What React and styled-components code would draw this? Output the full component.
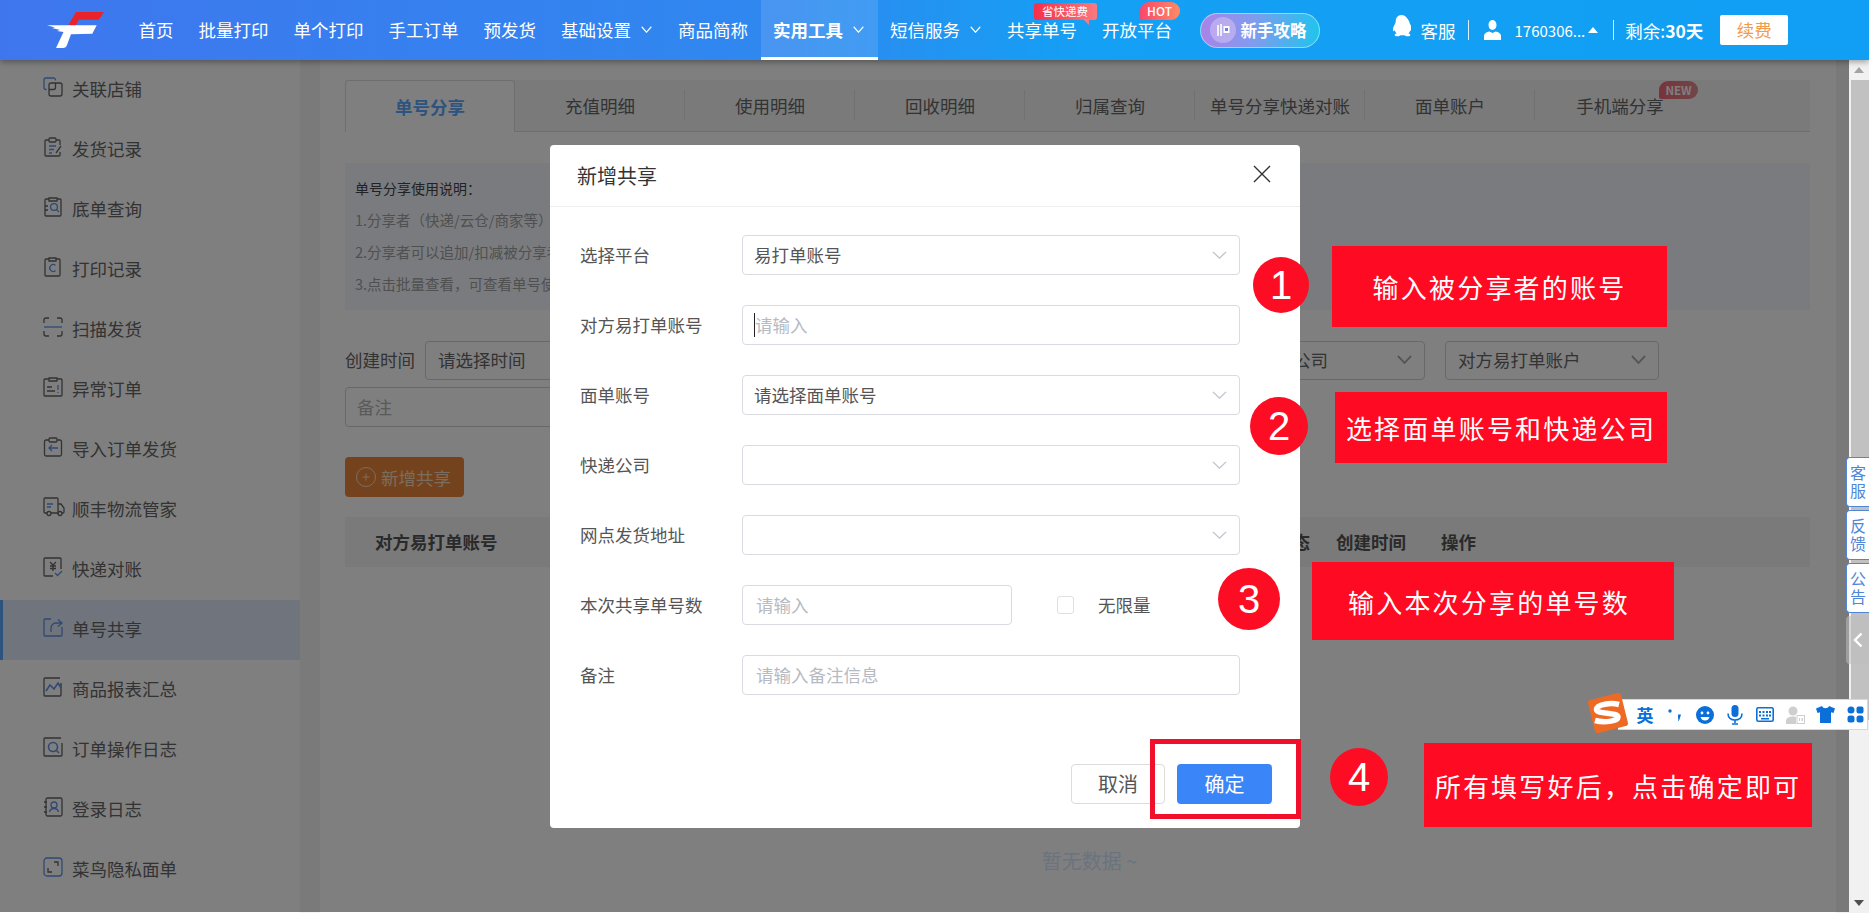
import React from "react";
import styled, { createGlobalStyle } from "styled-components";

const GlobalStyle = createGlobalStyle`
  html, body {
    margin: 0;
    height: 100%;
    overflow: hidden;
    background: #fff;
    font-family: "Noto Sans CJK SC", "Noto Sans", sans-serif;
  }
  * { box-sizing: border-box; }
`;

const navItems = [
  { label: "首页" },
  { label: "批量打印" },
  { label: "单个打印" },
  { label: "手工订单" },
  { label: "预发货" },
  { label: "基础设置", arrow: true },
  { label: "商品简称" },
  { label: "实用工具", arrow: true, active: true },
  { label: "短信服务", arrow: true },
  { label: "共享单号", badge: "save" },
  { label: "开放平台", badge: "hot" },
];

const tabs = ["单号分享", "充值明细", "使用明细", "回收明细", "归属查询", "单号分享快递对账", "面单账户", "手机端分享"];

const INK = "#666";
const TINT = "#5f93e6";

// sidebar icons are all drawn on a 20x20 box
const sideIcons = {
  link: (
    <>
      <path d="M12.5 3.5V3a2 2 0 0 0-2-2H3a2 2 0 0 0-2 2v7.5a2 2 0 0 0 2 2h.5" stroke={TINT} />
      <rect x="6" y="6" width="13" height="13" rx="2" />
      <path d="M6 12.5h4.5a2 2 0 0 0 2-2V6" />
    </>
  ),
  record: (
    <>
      <path d="M6 3H3a1 1 0 0 0-1 1v14a1 1 0 0 0 1 1h13a1 1 0 0 0 1-1v-3M17 8V4a1 1 0 0 0-1-1h-3" />
      <rect x="6" y="1" width="7" height="4" rx="1" />
      <path d="M6 9h7M6 12.5h5M6 16h3" stroke={TINT} />
      <path d="M18 9l-5 7" />
    </>
  ),
  search: (
    <>
      <path d="M6 2H3a1 1 0 0 0-1 1v15a1 1 0 0 0 1 1h14a1 1 0 0 0 1-1V3a1 1 0 0 0-1-1h-3M6 1h8v3H6z" />
      <circle cx="11" cy="10" r="3.4" stroke={TINT} />
      <path d="M13.5 12.5l2.5 2.5" stroke={TINT} />
      <path d="M2 9h3M2 13h3" />
    </>
  ),
  print: (
    <>
      <path d="M6 2H3a1 1 0 0 0-1 1v15a1 1 0 0 0 1 1h13a1 1 0 0 0 1-1V3a1 1 0 0 0-1-1h-3M6 1h7v3H6z" />
      <path d="M12.5 8.5a3.4 3.4 0 1 0 0 5" stroke={TINT} />
    </>
  ),
  scan: (
    <>
      <path d="M1 6V3a2 2 0 0 1 2-2h3M14 1h3a2 2 0 0 1 2 2v3M1 14v3a2 2 0 0 0 2 2h3M14 19h3a2 2 0 0 0 2-2v-3" />
      <path d="M1 10h18" stroke={TINT} />
    </>
  ),
  alert: (
    <>
      <path d="M6 2H2a1 1 0 0 0-1 1v15a1 1 0 0 0 1 1h16a1 1 0 0 0 1-1V3a1 1 0 0 0-1-1h-4M6 1h8v3H6z" />
      <path d="M4 10h5M4 14h8" />
      <path d="M15 8v5M15 15v1" stroke={TINT} />
    </>
  ),
  importing: (
    <>
      <path d="M6 3H3a1.5 1.5 0 0 0-1.5 1.5v13A1.5 1.5 0 0 0 3 19h14a1.5 1.5 0 0 0 1.5-1.5v-13A1.5 1.5 0 0 0 17 3h-3" />
      <rect x="6" y="1" width="8" height="4" rx="1" />
      <path d="M15 11H6M9 8l-3 3 3 3" stroke={TINT} />
    </>
  ),
  truck: (
    <>
      <path d="M4 16H2a1 1 0 0 1-1-1V2a1 1 0 0 1 1-1h12a1 1 0 0 1 1 1v14H8" />
      <path d="M15 7h3l3 4v4a1 1 0 0 1-1 1h-1" />
      <circle cx="6" cy="16.5" r="2" />
      <circle cx="17" cy="16.5" r="2" />
      <path d="M4 7h6M4 10h4" stroke={TINT} />
    </>
  ),
  bill: (
    <>
      <path d="M10 19H2a1 1 0 0 1-1-1V2a1 1 0 0 1 1-1h15a1 1 0 0 1 1 1v10" />
      <path d="M7 5l3 3 3-3M10 8v6M7 9h6M7 11.5h6" />
      <path d="M12 16l2.5 2.5L19 14" stroke={TINT} />
    </>
  ),
  share: (
    <>
      <path d="M8 2H2a1 1 0 0 0-1 1v15a1 1 0 0 0 1 1h16a1 1 0 0 0 1-1v-8" stroke={TINT} />
      <path d="M8 15v-4a5 5 0 0 1 5-5h5M15 2.5L19 6l-4 3.500" stroke={TINT} />
    </>
  ),
  chart: (
    <>
      <path d="M17 1H2a1 1 0 0 0-1 1v16a1 1 0 0 0 1 1h15a1 1 0 0 0 1-1V6" />
      <path d="M3 14l4-6 4 4 4-6 3 5" stroke={TINT} strokeWidth="1.6" />
    </>
  ),
  log: (
    <>
      <path d="M18 1H2a1 1 0 0 0-1 1v16a1 1 0 0 0 1 1h16a1 1 0 0 0 1-1V6" />
      <circle cx="10" cy="10" r="4.500" stroke={TINT} strokeWidth="1.6" />
      <path d="M13.500 13.500l2.500 2.500" stroke={TINT} strokeWidth="1.6" />
    </>
  ),
  login: (
    <>
      <rect x="3" y="1" width="16" height="18" rx="1.500" />
      <circle cx="11" cy="8" r="3" stroke={TINT} />
      <path d="M6.500 15c.5-2.500 2.300-3.500 4.500-3.500s4 1 4.500 3.500" stroke={TINT} />
      <path d="M1 5h3M1 10h3M1 15h3" />
    </>
  ),
  privacy: (
    <>
      <rect x="1" y="1" width="18" height="18" rx="3" stroke={TINT} />
      <path d="M5 11v4h4M15 9V5h-4" />
    </>
  ),
};

const sideMenu = [
  { label: "关联店铺", icon: "link" },
  { label: "发货记录", icon: "record" },
  { label: "底单查询", icon: "search" },
  { label: "打印记录", icon: "print" },
  { label: "扫描发货", icon: "scan" },
  { label: "异常订单", icon: "alert" },
  { label: "导入订单发货", icon: "importing" },
  { label: "顺丰物流管家", icon: "truck", wide: true },
  { label: "快递对账", icon: "bill" },
  { label: "单号共享", icon: "share", active: true },
  { label: "商品报表汇总", icon: "chart" },
  { label: "订单操作日志", icon: "log" },
  { label: "登录日志", icon: "login" },
  { label: "菜鸟隐私面单", icon: "privacy" },
];

const formRows = [
  { label: "选择平台", kind: "select", value: "易打单账号" },
  { label: "对方易打单账号", kind: "focus", placeholder: "请输入" },
  { label: "面单账号", kind: "select", value: "请选择面单账号" },
  { label: "快递公司", kind: "select" },
  { label: "网点发货地址", kind: "select" },
  { label: "本次共享单号数", kind: "count", placeholder: "请输入" },
  { label: "备注", kind: "input", placeholder: "请输入备注信息" },
];

const steps = [
  { n: 1, text: "输入被分享者的账号", cx: 1253, cy: 257, cs: 56, x: 1332, y: 246, w: 335, h: 81 },
  { n: 2, text: "选择面单账号和快递公司", cx: 1250, cy: 397, cs: 58, x: 1335, y: 392, w: 332, h: 71 },
  { n: 3, text: "输入本次分享的单号数", cx: 1218, cy: 568, cs: 62, x: 1312, y: 562, w: 362, h: 78, nudge: 8 },
  { n: 4, text: "所有填写好后，点击确定即可", cx: 1330, cy: 748, cs: 58, x: 1424, y: 743, w: 388, h: 84 },
];

function Chevron({ w = 15, h = 8, color = "#c0c4cc", sw = 1.5 }) {
  return (
    <svg width={w} height={h} viewBox="0 0 16 9" fill="none" stroke={color} strokeWidth={sw} preserveAspectRatio="none">
      <path d="M1 1l7 7 7-7" />
    </svg>
  );
}

function Logo() {
  return (
    <svg width="57" height="37" viewBox="0 0 57 37">
      <path d="M29 0h28l-5.300 7.700h-20L29 13.300h-7.700z" fill="#e8232a" />
      <path
        d="M0 13.300h49.700l-4.400 8.400-21.300.6-4 10.700Q19 36 16 36H9l7.500-16-6.500-1 3-1-8-2 3-.5z"
        fill="#fff"
      />
    </svg>
  );
}

function QQIcon() {
  return (
    <svg width="19" height="22" viewBox="0 0 19 22" fill="#fff">
      <path d="M9.500 0C5.500 0 3.700 3 3.700 6.500c0 1-.3 1.800-.9 2.800C1.500 11.500.7 13.500 1 15.500c.2 1 .8 1 1.700-.3.3 1.200 1 2.300 1.800 3-1.500.6-2 1.500-1.700 2.300.4.900 3 1.200 5 .2.500-.3 1-.4 2.700-.4s2.200.1 2.700.4c2 1 4.600.7 5-.2.300-.8-.2-1.700-1.700-2.300.8-.7 1.500-1.800 1.800-3 .9 1.300 1.500 1.300 1.700.3.300-2-.5-4-1.800-6.200-.6-1-.9-1.800-.9-2.800C15.300 3 13.500 0 9.500 0z" />
    </svg>
  );
}

function UserIcon() {
  return (
    <svg width="17" height="20" viewBox="0 0 17 20" fill="#fff">
      <ellipse cx="8.500" cy="5" rx="4" ry="5" />
      <path d="M0 20v-4c0-2.500 2.500-4 5.500-4.500L8.500 13l3-1.500c3 .5 5.500 2 5.500 4.500v4zM7.300 14.500h2.400v2.500H7.300z" />
    </svg>
  );
}

function GuideIcon() {
  return (
    <svg width="26" height="26" viewBox="0 0 26 26">
      <circle cx="13" cy="13" r="13" fill="#c4b4f2" opacity="0.75" />
      <path d="M8 8v11M11 7v12" stroke="#fff" strokeWidth="1.600" />
      <path d="M13.500 9h6v7h-6z" fill="#fff" />
      <path d="M15 11h3v3h-3z" fill="#6f7fe8" />
    </svg>
  );
}

function SogouLogo() {
  return (
    <svg width="42" height="42" viewBox="0 0 42 42">
      <rect x="4" y="4" width="34" height="34" rx="3" fill="#ee6a24" transform="rotate(-14 21 21)" />
      <path d="M32 12.500C24 10.500 10 12 9.500 17.500 9 22.500 31 20 31 25c0 4.500-14 6-23 3.500" fill="none" stroke="#fff" strokeWidth="5.500" />
    </svg>
  );
}

function ImeBar() {
  const blue = "#0a6fd8";
  return (
    <Ime>
      <ImeLogo><SogouLogo /></ImeLogo>
      <ImeLang>英</ImeLang>
      <ImeSlot>
        <svg width="16" height="16" viewBox="0 0 16 16" fill={blue}>
          <circle cx="3" cy="4" r="1.700" />
          <path d="M11 7.500h3l-1.500 5-1.700 2 .7-3H11z" />
        </svg>
      </ImeSlot>
      <ImeSlot>
        <svg width="18" height="18" viewBox="0 0 18 18">
          <circle cx="9" cy="9" r="9" fill={blue} />
          <circle cx="6" cy="7" r="1.400" fill="#fff" />
          <circle cx="12" cy="7" r="1.400" fill="#fff" />
          <path d="M4.500 11h9c-.6 2.500-2.400 3.500-4.500 3.500S5.100 13.500 4.500 11z" fill="#fff" />
        </svg>
      </ImeSlot>
      <ImeSlot>
        <svg width="16" height="20" viewBox="0 0 16 20" fill="none" stroke={blue} strokeWidth="1.600">
          <rect x="4.500" y="0" width="7" height="12" rx="3.500" fill={blue} stroke="none" />
          <path d="M1 8.500c0 4.200 3 6.500 7 6.500s7-2.300 7-6.500M8 15v3M5 19h6" />
        </svg>
      </ImeSlot>
      <ImeSlot>
        <svg width="18" height="15" viewBox="0 0 18 15">
          <rect x="0.800" y="0.800" width="16.400" height="13.400" rx="1.500" fill="none" stroke={blue} strokeWidth="1.600" />
          <path d="M3 4h2v2H3zM6.500 4h2v2h-2zM10 4h2v2h-2zM13 4h2v2h-2zM3 7.500h2v2H3zM6.500 7.500h2v2h-2zM10 7.500h2v2h-2zM13 7.500h2v2h-2zM5 11h8v1.500H5z" fill={blue} />
        </svg>
      </ImeSlot>
      <ImeSlot>
        <svg width="19" height="18" viewBox="0 0 19 18" fill="#cfcfcf">
          <circle cx="7" cy="5" r="4.500" />
          <path d="M0 18v-3c0-3 3-4.500 7-4.500 1.200 0 2.300.1 3 .4V18z" />
          <rect x="11" y="9.500" width="7.500" height="8" fill="#fff" stroke="#cfcfcf" />
          <path d="M13 12h1v3h-1zM15.500 12h1.500v3h-1.500z" />
        </svg>
      </ImeSlot>
      <ImeSlot>
        <svg width="19" height="17" viewBox="0 0 19 17" fill={blue}>
          <path d="M6 0L0 2.500 1.500 7l2.500-.8V17h11V6.200l2.500.8L19 2.500 13 0c-.5 1.500-2 2.200-3.500 2.200S6.500 1.500 6 0z" />
        </svg>
      </ImeSlot>
      <ImeSlot>
        <svg width="17" height="17" viewBox="0 0 17 17" fill={blue}>
          <circle cx="4" cy="4" r="3.500" />
          <rect x="9.500" y="0.500" width="7" height="7" rx="2" />
          <rect x="0.500" y="9.500" width="7" height="7" rx="2.500" />
          <rect x="9.500" y="9.500" width="7" height="7" rx="2.500" />
        </svg>
      </ImeSlot>
    </Ime>
  );
}

function FormControl({ row }) {
  if (row.kind === "select") {
    return (
      <Field>
        <FieldValue>{row.value}</FieldValue>
        <Chevron />
      </Field>
    );
  }
  if (row.kind === "focus") {
    return (
      <FocusWrap>
        <TextInput placeholder={row.placeholder} readOnly />
        <TextCaret />
      </FocusWrap>
    );
  }
  if (row.kind === "count") {
    return (
      <CountRow>
        <CountInput placeholder={row.placeholder} readOnly />
        <CheckBox />
        <CheckLabel>无限量</CheckLabel>
      </CountRow>
    );
  }
  return <TextInput placeholder={row.placeholder} readOnly />;
}

export default function App() {
  return (
    <Page>
      <GlobalStyle />
      <Header>
        <LogoBox><Logo /></LogoBox>
        <Nav>
          {navItems.map((item) => (
            <NavItem key={item.label} $active={item.active}>
              {item.label}
              {item.arrow && <NavArrow><Chevron w={11} h={7} color="#fff" sw={1.6} /></NavArrow>}
              {item.badge === "save" && <SaveBadge>省快递费</SaveBadge>}
              {item.badge === "hot" && <HotBadge>HOT</HotBadge>}
            </NavItem>
          ))}
        </Nav>
        <GuidePill>
          <GuideIcon />
          新手攻略
        </GuidePill>
        <Account>
          <QQSlot><QQIcon /></QQSlot>
          <AccountText>客服</AccountText>
          <Divider />
          <UserIcon />
          <Phone>1760306...</Phone>
          <Caret />
          <Divider />
          <RemainText>剩余:<b>30天</b></RemainText>
          <Renew>续费</Renew>
        </Account>
      </Header>

      <Body>
        <Sidebar>
          {sideMenu.map((m) => (
            <SideItem key={m.label} $active={m.active}>
              <SideIcon width={m.wide ? 22 : 20} height="20" viewBox={m.wide ? "0 0 22 20" : "0 0 20 20"}>
                {sideIcons[m.icon]}
              </SideIcon>
              {m.label}
            </SideItem>
          ))}
        </Sidebar>
        <Main>
          <TabBar>
            {tabs.map((t, i) => (
              <Tab key={t} $active={i === 0}>
                {t}
                {t === "手机端分享" && <NewBadge>NEW</NewBadge>}
              </Tab>
            ))}
          </TabBar>
          <Notice>
            <NoticeTitle>单号分享使用说明：</NoticeTitle>
            <NoticeLine>1.分享者（快递/云仓/商家等）</NoticeLine>
            <NoticeLine>2.分享者可以追加/扣减被分享者</NoticeLine>
            <NoticeLine>3.点击批量查看，可查看单号使用</NoticeLine>
          </Notice>
          <FilterRow>
            <FilterLabel>创建时间</FilterLabel>
            <FilterSelect $w={800}>请选择时间</FilterSelect>
            <FilterSelect $w={180}>
              快递公司
              <Chevron color="#a8a8a8" w={15} h={9} sw={1.8} />
            </FilterSelect>
            <FilterSelect $w={214}>
              对方易打单账户
              <Chevron color="#a8a8a8" w={15} h={9} sw={1.8} />
            </FilterSelect>
          </FilterRow>
          <RemarkInput placeholder="备注" readOnly />
          <AddButton>
            <svg width="20" height="20" viewBox="0 0 20 20" fill="none" stroke="#f7d9bd" strokeWidth="1">
              <circle cx="10" cy="10" r="9.500" />
              <path d="M10 6.500v7M6.500 10h7" />
            </svg>
            新增共享
          </AddButton>
          <TableHead>
            <HeadCell $w={900}>对方易打单账号</HeadCell>
            <HeadCell>状态</HeadCell>
            <HeadCell $ml={26}>创建时间</HeadCell>
            <HeadCell $ml={35}>操作</HeadCell>
          </TableHead>
          <EmptyText>暂无数据 ~</EmptyText>
        </Main>
        <RightGutter />
        <Scrollbar>
          <ScrollArrow $up />
          <ScrollThumb />
          <ScrollArrow />
        </Scrollbar>
      </Body>

      <Mask />

      <Modal>
        <ModalHead>
          新增共享
          <CloseBtn>
            <svg width="18" height="18" viewBox="0 0 18 18" stroke="#333" strokeWidth="1.400">
              <path d="M1 1l16 16M17 1L1 17" />
            </svg>
          </CloseBtn>
        </ModalHead>
        <ModalBody>
          {formRows.map((row) => (
            <FormRow key={row.label}>
              <FormLabel>{row.label}</FormLabel>
              <FormControl row={row} />
            </FormRow>
          ))}
        </ModalBody>
        <ModalFoot>
          <CancelBtn>取消</CancelBtn>
          <ConfirmBtn>确定</ConfirmBtn>
        </ModalFoot>
      </Modal>

      <ConfirmMark />
      {steps.map((s) => (
        <React.Fragment key={s.n}>
          <StepNumber $x={s.cx} $y={s.cy} $s={s.cs}>{s.n}</StepNumber>
          <Callout $x={s.x} $y={s.y} $w={s.w} $h={s.h} $nudge={s.nudge}>{s.text}</Callout>
        </React.Fragment>
      ))}

      <SideTabs>
        <SideTab>客服</SideTab>
        <SideTab>反馈</SideTab>
        <SideTab>公告</SideTab>
        <Collapse>
          <svg width="10" height="16" viewBox="0 0 10 16" fill="none" stroke="#fff" strokeWidth="2.400">
            <path d="M8.500 1.500L2 8l6.500 6.500" />
          </svg>
        </Collapse>
      </SideTabs>

      <ImeBar />
    </Page>
  );
}

const Page = styled.div`
  position: relative;
  width: 1869px;
  height: 913px;
  overflow: hidden;
  display: flex;
  flex-direction: column;
  background: #fff;
  color: #333;
`;

const Header = styled.header`
  position: relative;
  z-index: 20;
  flex: 0 0 60px;
  display: flex;
  align-items: center;
  padding-left: 47px;
  background: linear-gradient(90deg, #3f76ee 0%, #2f88f0 42%, #14a0f4 58%, #109ff4 100%);
  box-shadow: 0 2px 6px rgba(0, 0, 0, 0.35);
  color: #fff;
  font-size: 17.5px;
`;

const LogoBox = styled.div`
  width: 79px;
  height: 37px;
  flex: none;
`;

const Nav = styled.nav`
  display: flex;
  height: 60px;
  flex: none;
`;

const NavItem = styled.div`
  position: relative;
  display: flex;
  align-items: center;
  padding: 0 12.5px;
  white-space: nowrap;
  font-weight: ${(p) => (p.$active ? 700 : 400)};
  background: ${(p) => (p.$active ? "rgba(255, 255, 255, 0.12)" : "transparent")};
  border-bottom: 3px solid ${(p) => (p.$active ? "#fff" : "transparent")};
  border-top: 1px solid transparent;
`;

const NavArrow = styled.span`
  display: flex;
  margin: 0 1px 0 10px;
`;

const SaveBadge = styled.span`
  position: absolute;
  top: 2px;
  left: 39px;
  width: 63px;
  height: 17px;
  border-radius: 3px;
  background: linear-gradient(90deg, #f52f4a, #fb7a7e);
  font-size: 11.500px;
  line-height: 17px;
  text-align: center;
  &::after {
    content: "";
    position: absolute;
    right: 8px;
    bottom: -5px;
    border-top: 6px solid #fb7a7e;
    border-left: 6px solid transparent;
  }
`;

const HotBadge = styled.span`
  position: absolute;
  top: 1px;
  left: 50px;
  width: 40px;
  height: 18px;
  border-radius: 9px 9px 9px 2px;
  background: linear-gradient(90deg, #f8476a, #ff8a66);
  font-size: 12px;
  font-weight: 500;
  line-height: 18px;
  text-align: center;
`;

const GuidePill = styled.div`
  flex: none;
  display: flex;
  align-items: center;
  gap: 5px;
  width: 120px;
  height: 35px;
  margin-left: 15px;
  padding-left: 9px;
  border: 1px solid rgba(255, 255, 255, 0.45);
  border-radius: 18px;
  background: linear-gradient(90deg, #a884e8, #7f9cee 45%, #1fc4ee);
  font-size: 16.500px;
  font-weight: 700;
  white-space: nowrap;
`;

const Account = styled.div`
  flex: none;
  display: flex;
  align-items: center;
  margin-left: 72px;
`;

const QQSlot = styled.span`
  display: flex;
  margin-top: -8px;
`;

const AccountText = styled.span`
  margin-left: 10px;
  white-space: nowrap;
`;

const RemainText = styled.span`
  margin-left: -4px;
  white-space: nowrap;
  b { font-weight: 700; }
`;

const Divider = styled.i`
  width: 1px;
  height: 20px;
  margin-left: 12px;
  margin-right: 15px;
  background: rgba(255, 255, 255, 0.85);
`;

const Phone = styled.span`
  margin-left: 14px;
  font-size: 15px;
  white-space: nowrap;
`;

const Caret = styled.i`
  margin-left: 3px;
  margin-right: 3px;
  border: 5px solid transparent;
  border-top: 0;
  border-bottom: 6px solid #fff;
`;

const Renew = styled.div`
  width: 68px;
  height: 30px;
  margin-left: 17px;
  border-radius: 2px;
  background: #fff;
  color: #f29b4c;
  text-align: center;
  line-height: 30px;
`;

const Body = styled.div`
  flex: 1;
  min-height: 0;
  display: flex;
  background: #f5f5f5;
`;

const Sidebar = styled.aside`
  flex: 0 0 300px;
  background: #fff;
`;

const SideItem = styled.div`
  display: flex;
  align-items: center;
  gap: 9px;
  height: 60px;
  padding-left: ${(p) => (p.$active ? "40px" : "43px")};
  padding-bottom: 3px;
  border-left: ${(p) => (p.$active ? `3px solid #5aa8ff` : "none")};
  background: ${(p) => (p.$active ? "#e0e9fa" : "transparent")};
  color: #666;
  font-size: 17.500px;
  white-space: nowrap;
`;

const SideIcon = styled.svg`
  flex: none;
  margin-top: -3px;
  margin-right: ${(p) => (p.width === 22 ? "-2px" : "0")};
  fill: none;
  stroke: ${INK};
  stroke-width: 1.300;
`;

const Main = styled.main`
  margin-left: 20px;
  width: 1516px;
  padding: 20px 26px 0 25px;
  background: #fff;
`;

const RightGutter = styled.div`
  flex: 0 0 13px;
  background: #f2f2f2;
`;

const TabBar = styled.div`
  display: flex;
  height: 52px;
  background: #f5f5f5;
  border-bottom: 1px solid #ddd;
`;

const Tab = styled.div`
  position: relative;
  flex: 0 0 170px;
  display: flex;
  align-items: center;
  justify-content: center;
  height: ${(p) => (p.$active ? "52px" : "51px")};
  background: ${(p) => (p.$active ? "#fff" : "transparent")};
  border: ${(p) => (p.$active ? "1px solid #ddd" : "none")};
  border-bottom: none;
  border-radius: ${(p) => (p.$active ? "4px 4px 0 0" : "0")};
  color: ${(p) => (p.$active ? "#5aa8ff" : "#666")};
  font-size: 17.500px;
  font-weight: ${(p) => (p.$active ? 700 : 400)};
  white-space: nowrap;
  &:not(:first-child)::after {
    content: "";
    position: absolute;
    right: 0;
    top: 10px;
    height: 30px;
    width: 1px;
    background: #e2e2e2;
  }
  &:last-child::after { display: none; }
`;

const NewBadge = styled.span`
  position: absolute;
  top: 1px;
  left: 124px;
  width: 39px;
  height: 18px;
  border-radius: 9px 9px 9px 2px;
  background: linear-gradient(90deg, #f04f5f, #e07a80);
  color: #fff;
  opacity: 0.85;
  font-size: 11.500px;
  font-weight: 700;
  line-height: 18px;
  text-align: center;
`;

const Notice = styled.div`
  height: 147px;
  margin-top: 31px;
  padding: 9px 10px 0;
  background: #f5f7fc;
  font-size: 14px;
  line-height: 32px;
`;

const NoticeTitle = styled.div`
  color: #444;
`;

const NoticeLine = styled.div`
  color: #a0a0a0;
  font-size: 14.500px;
`;

const FilterRow = styled.div`
  display: flex;
  align-items: center;
  gap: 20px;
  margin-top: 31px;
`;

const FilterLabel = styled.span`
  width: 70px;
  margin-right: -10px;
  padding-bottom: 2px;
  color: #666;
  font-size: 17.500px;
  white-space: nowrap;
`;

const FilterSelect = styled.div`
  flex: 0 0 ${(p) => p.$w}px;
  display: flex;
  align-items: center;
  justify-content: space-between;
  height: 39px;
  padding: 0 12px 2px;
  border: 1px solid #d0d0d0;
  border-radius: 4px;
  color: #666;
  font-size: 17.500px;
  white-space: nowrap;
`;

const RemarkInput = styled.input`
  display: block;
  width: 250px;
  height: 40px;
  margin-top: 7px;
  padding: 0 11px 2px;
  border: 1px solid #d0d0d0;
  border-radius: 4px;
  outline: none;
  font: inherit;
  font-size: 17.500px;
  &::placeholder { color: #b4b4b4; }
`;

const AddButton = styled.div`
  display: flex;
  align-items: center;
  gap: 5px;
  width: 119px;
  height: 40px;
  margin-top: 30px;
  padding-left: 11px;
  border-radius: 4px;
  background: #e8873a;
  color: #f7d9bd;
  font-size: 17.500px;
  white-space: nowrap;
`;

const TableHead = styled.div`
  display: flex;
  align-items: center;
  height: 50px;
  margin-top: 20px;
  padding: 0 0 2px 30px;
  background: #f5f5f5;
  color: #555;
  font-size: 17.500px;
  font-weight: 700;
`;

const HeadCell = styled.div`
  flex: none;
  width: ${(p) => (p.$w !== undefined ? `${p.$w}px` : "auto")};
  margin-left: ${(p) => p.$ml || 0}px;
  white-space: nowrap;
`;

const EmptyText = styled.div`
  margin-top: 279px;
  padding-left: 24px;
  color: #d4e8ff;
  font-size: 20px;
  line-height: 30px;
  text-align: center;
  white-space: pre;
`;

const Scrollbar = styled.div`
  flex: 0 0 20px;
  display: flex;
  flex-direction: column;
  align-items: stretch;
  background: #f1f1f1;
`;

const ScrollArrow = styled.div`
  flex: 0 0 20px;
  display: flex;
  align-items: center;
  justify-content: center;
  margin-top: ${(p) => (p.$up ? "0" : "auto")};
  &::before {
    content: "";
    border: 5px solid transparent;
    ${(p) => (p.$up ? "border-bottom: 6px solid #a3a3a3; border-top: 0;" : "border-top: 6px solid #505050; border-bottom: 0;")}
  }
`;

const ScrollThumb = styled.div`
  flex: 0 0 640px;
  margin-left: 2px;
  background: #c1c1c1;
`;

const Mask = styled.div`
  position: absolute;
  z-index: 10;
  top: 60px;
  left: 0;
  right: 20px;
  bottom: 1px;
  background: rgba(0, 0, 0, 0.5);
`;

const Modal = styled.section`
  position: absolute;
  z-index: 11;
  top: 145px;
  left: 550px;
  width: 750px;
  height: 683px;
  display: flex;
  flex-direction: column;
  border-radius: 4px;
  background: #fff;
`;

const ModalHead = styled.div`
  flex: 0 0 62px;
  display: flex;
  align-items: center;
  justify-content: space-between;
  padding: 0 29px 0 27px;
  border-bottom: 1px solid #eee;
  font-size: 20px;
`;

const CloseBtn = styled.div`
  display: flex;
  margin-top: -4px;
`;

const ModalBody = styled.div`
  display: flex;
  flex-direction: column;
  gap: 30px;
  padding: 28px 60px 0 30px;
`;

const FormRow = styled.div`
  display: flex;
  align-items: center;
  height: 40px;
`;

const FormLabel = styled.label`
  flex: 0 0 162px;
  padding-bottom: 2px;
  color: #555;
  font-size: 17.500px;
  white-space: nowrap;
`;

const Field = styled.div`
  flex: 1;
  display: flex;
  align-items: center;
  justify-content: space-between;
  height: 40px;
  padding: 0 12px 0 11px;
  border: 1px solid #d9dbe0;
  border-radius: 4px;
  color: #555;
  font-size: 17.500px;
`;

const FieldValue = styled.span`
  padding-bottom: 2px;
`;

const TextInput = styled.input`
  flex: 1;
  width: 100%;
  height: 40px;
  padding: 0 13px 2px;
  border: 1px solid #d9dbe0;
  border-radius: 4px;
  outline: none;
  font: inherit;
  font-size: 17.500px;
  &::placeholder { color: #b6bac2; }
`;

const FocusWrap = styled.div`
  position: relative;
  flex: 1;
  display: flex;
  input { padding-left: 12px; }
`;

const TextCaret = styled.i`
  position: absolute;
  left: 12px;
  top: 8px;
  width: 1px;
  height: 24px;
  background: #222;
`;

const CountRow = styled.div`
  flex: 1;
  display: flex;
  align-items: center;
`;

const CountInput = styled(TextInput)`
  flex: 0 0 270px;
  width: 270px;
`;

const CheckBox = styled.i`
  width: 17px;
  height: 18px;
  margin-left: 45px;
  border: 1px solid #e0e0e0;
  border-radius: 3px;
`;

const CheckLabel = styled.span`
  margin-left: 24px;
  padding-bottom: 2px;
  color: #555;
  font-size: 17.500px;
`;

const ModalFoot = styled.div`
  margin-top: auto;
  display: flex;
  justify-content: flex-end;
  gap: 12px;
  padding: 0 28px 24px 0;
`;

const CancelBtn = styled.div`
  width: 94px;
  height: 40px;
  border: 1px solid #dcdcdc;
  border-radius: 4px;
  color: #555;
  font-size: 20px;
  line-height: 38px;
  text-align: center;
`;

const ConfirmBtn = styled.div`
  width: 95px;
  height: 40px;
  border-radius: 4px;
  background: #3a85f8;
  color: #fff;
  font-size: 20px;
  line-height: 40px;
  text-align: center;
`;

const ConfirmMark = styled.div`
  position: absolute;
  z-index: 12;
  top: 739px;
  left: 1150px;
  width: 151px;
  height: 80px;
  border: 5px solid #f0102c;
`;

const StepNumber = styled.div`
  position: absolute;
  z-index: 12;
  top: ${(p) => p.$y}px;
  left: ${(p) => p.$x}px;
  width: ${(p) => p.$s}px;
  height: ${(p) => p.$s}px;
  border-radius: 50%;
  background: #fd0d24;
  color: #fff;
  font-family: "Liberation Sans", sans-serif;
  font-size: 40px;
  line-height: ${(p) => p.$s}px;
  text-align: center;
`;

const Callout = styled.div`
  position: absolute;
  z-index: 12;
  top: ${(p) => p.$y}px;
  left: ${(p) => p.$x}px;
  width: ${(p) => p.$w}px;
  height: ${(p) => p.$h}px;
  display: flex;
  align-items: center;
  justify-content: center;
  padding-right: ${(p) => p.$nudge || 0}px;
  background: #ff0a23;
  color: #fff;
  font-size: 26px;
  letter-spacing: 2.200px;
  white-space: nowrap;
`;

const SideTabs = styled.div`
  position: absolute;
  z-index: 13;
  top: 457px;
  right: 0;
  width: 23px;
  display: flex;
  flex-direction: column;
  gap: 3px;
`;

const SideTab = styled.div`
  height: 50px;
  padding: 5px 0 0 3px;
  border: 1px solid #4f86d8;
  border-right: none;
  border-radius: 4px 0 0 4px;
  background: #fff;
  color: #4f86d8;
  font-size: 16px;
  line-height: 18px;
  word-break: break-all;
`;

const Collapse = styled.div`
  height: 48px;
  display: flex;
  align-items: center;
  justify-content: center;
  border-radius: 4px 0 0 4px;
  background: rgba(190, 190, 190, 0.55);
`;

const Ime = styled.div`
  position: absolute;
  z-index: 14;
  top: 699px;
  right: 1px;
  width: 250px;
  height: 31px;
  display: flex;
  align-items: center;
  padding-left: 12px;
  background: #fff;
  border: 1px solid #d5d8de;
  border-left: none;
`;

const ImeLogo = styled.div`
  position: absolute;
  left: -31px;
  top: -8px;
  z-index: 1;
`;

const ImeLang = styled.span`
  flex: 0 0 30px;
  color: #0a6fd8;
  font-size: 17px;
  font-weight: 700;
  text-align: center;
`;

const ImeSlot = styled.span`
  flex: 0 0 30px;
  display: flex;
  align-items: center;
  justify-content: center;
`;
